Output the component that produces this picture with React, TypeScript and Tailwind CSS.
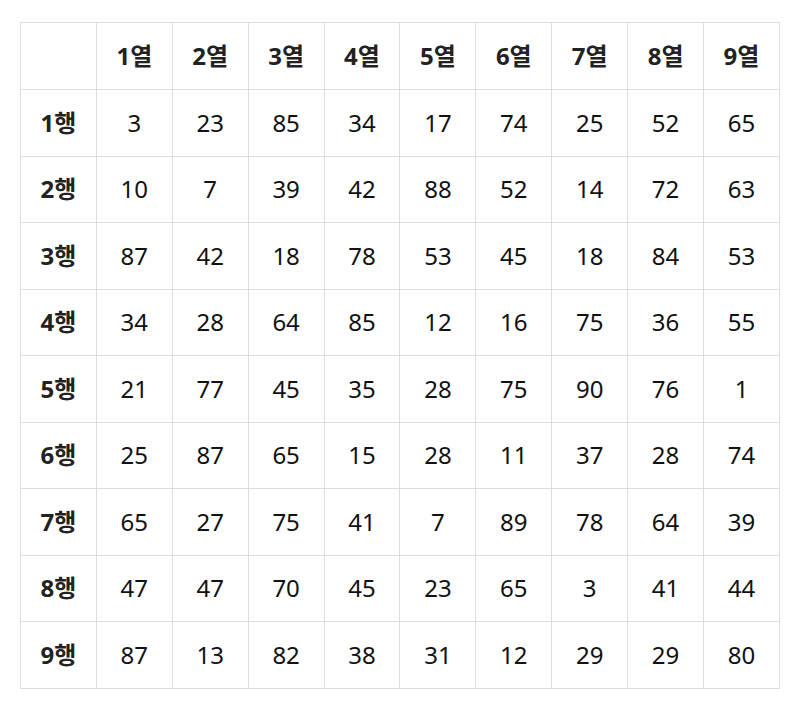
const data = [
  [3, 23, 85, 34, 17, 74, 25, 52, 65],
  [10, 7, 39, 42, 88, 52, 14, 72, 63],
  [87, 42, 18, 78, 53, 45, 18, 84, 53],
  [34, 28, 64, 85, 12, 16, 75, 36, 55],
  [21, 77, 45, 35, 28, 75, 90, 76, 1],
  [25, 87, 65, 15, 28, 11, 37, 28, 74],
  [65, 27, 75, 41, 7, 89, 78, 64, 39],
  [47, 47, 70, 45, 23, 65, 3, 41, 44],
  [87, 13, 82, 38, 31, 12, 29, 29, 80],
];

export default function App() {
  return (
    <div
      className="w-[800px] h-[706px] bg-white pt-[22px] pl-[20px]"
      style={{ fontFamily: '"Noto Sans", "Noto Sans CJK KR", sans-serif' }}
    >
      <table className="w-[760px] table-fixed border-collapse text-[#222] text-[24px]">
        <thead>
          <tr className="h-[67px]">
            <th className="border border-[#dddddd] font-bold"></th>
            {Array.from({ length: 9 }, (_, i) => (
              <th key={i} className="border border-[#dddddd] font-bold text-center">
                {i + 1}열
              </th>
            ))}
          </tr>
        </thead>
        <tbody>
          {data.map((row, r) => (
            <tr key={r} className="h-[66.5px]">
              <th className="border border-[#dddddd] font-bold text-center">{r + 1}행</th>
              {row.map((v, c) => (
                <td key={c} className="border border-[#dddddd] text-center font-normal text-[#111]">
                  {v}
                </td>
              ))}
            </tr>
          ))}
        </tbody>
      </table>
    </div>
  );
}
